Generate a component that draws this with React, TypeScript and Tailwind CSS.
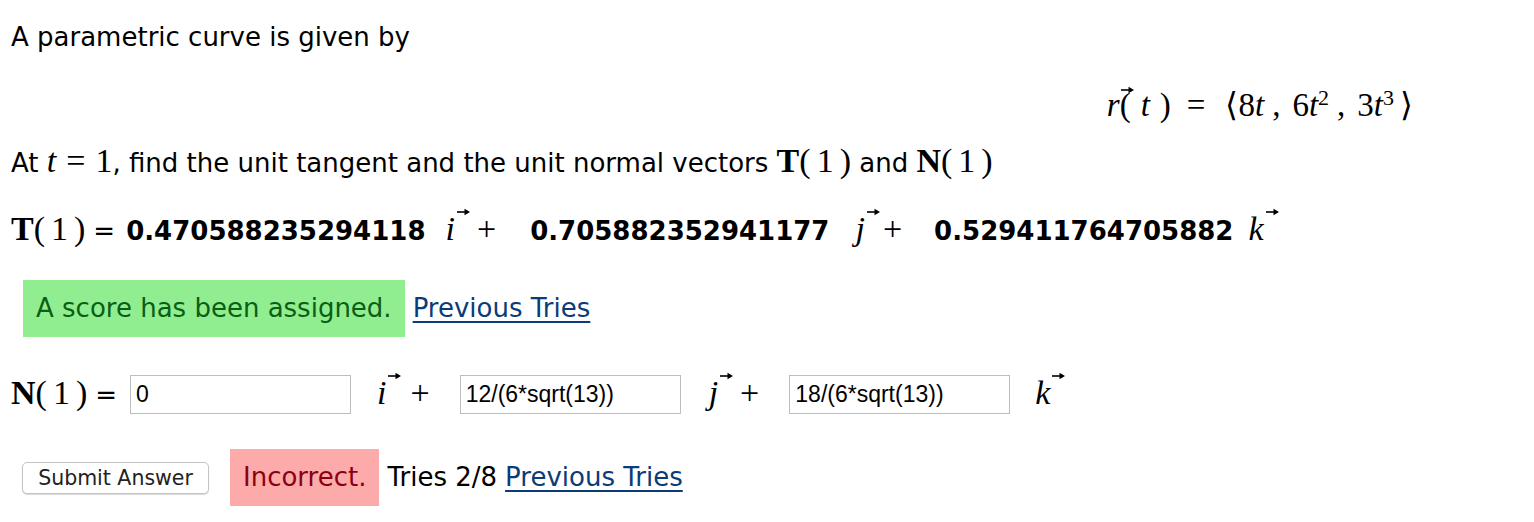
import React from 'react'

const SERIF = "font-['Liberation_Serif','Times_New_Roman',serif]"

function Arrow({ className }: { className: string }) {
  return (
    <svg className={className} width="13" height="8" viewBox="0 0 13 8">
      <path d="M0 4h9" stroke="black" strokeWidth="1.6" />
      <path d="M7.5 0.8L13 4L7.5 7.2z" fill="black" />
    </svg>
  )
}

// MathJax-style vector, arrow sits a little right of the letter
function Vec({ ch, className = '' }: { ch: string; className?: string }) {
  return (
    <span className={`relative inline-block italic ${SERIF} text-[34px] ${className}`}>
      {ch}
      <Arrow className="absolute left-[calc(100%+2px)] top-[-1px]" />
    </span>
  )
}

function Plus({ className = '' }: { className?: string }) {
  return <span className={`${SERIF} text-[34px] ${className}`}>+</span>
}

// bold letter applied to ( 1 )
function AtOne({ letter }: { letter: string }) {
  return (
    <span className={`${SERIF} text-[34px]`}>
      <b>{letter}</b>(<span className="mx-[6px]">1</span>)
    </span>
  )
}

function Answer({ value }: { value: string }) {
  return (
    <input
      readOnly
      value={value}
      className="h-[39px] w-[221px] self-center border border-[#bdbdbd] bg-white px-[5px] font-['Liberation_Sans',Arial,sans-serif] text-[23px] text-black outline-none"
    />
  )
}

export default function App() {
  return (
    <div className="min-h-[522px] bg-white pl-[11px] font-['DejaVu_Sans',Verdana,sans-serif] text-[26px] text-black">
      <div className="pt-[22px] leading-[31px]">A parametric curve is given by</div>

      <div className={`mt-[34px] flex justify-end pr-[121px] leading-[36px] ${SERIF} text-[33px]`}>
        <span className="relative italic">
          r
          <Arrow className="absolute left-[14px] top-[-1px]" />
        </span>
        <span>
          (<i className="mx-[10px]">t</i>)
        </span>
        <span className="ml-[16px]">=</span>
        <span className="ml-[20px]">
          ⟨8<i>t</i>
          <span className="ml-[8px]">,</span>
          <span className="ml-[12px]">6</span>
          <i>t</i>
          <sup className="text-[22px]">2</sup>
          <span className="ml-[8px]">,</span>
          <span className="ml-[12px]">3</span>
          <i>t</i>
          <sup className="text-[22px]">3</sup>
          <span className="ml-[6px]">⟩</span>
        </span>
      </div>

      <div className="mt-[20px] leading-[36px]">
        At{' '}
        <span className={`${SERIF} text-[34px]`}>
          <i>t</i>
          <span className="mx-[10px]">=</span>1
        </span>
        , find the unit tangent and the unit normal vectors <AtOne letter="T" /> and <AtOne letter="N" />
      </div>

      <div className="mt-[28px] flex items-baseline leading-[40px]">
        <AtOne letter="T" />
        <span className="ml-[8px]">=</span>
        <b className="ml-[11px]">0.470588235294118</b>
        <Vec ch="i" className="ml-[20px]" />
        <Plus className="ml-[22px]" />
        <b className="ml-[34px]">0.705882352941177</b>
        <Vec ch="j" className="ml-[26px]" />
        <Plus className="ml-[18px]" />
        <b className="ml-[32px]">0.529411764705882</b>
        <Vec ch="k" className="ml-[15px]" />
      </div>

      <div className="mt-[29px] flex items-center">
        <span className="ml-[12px] flex h-[57px] items-center bg-[#90ee90] px-[13px] text-[#0b5e14]">
          A score has been assigned.
        </span>
        <a href="#" className="ml-[8px] text-[#0b3b78] underline decoration-[2px] underline-offset-[4px]">
          Previous Tries
        </a>
      </div>

      <div className="mt-[36px] flex items-baseline leading-[40px]">
        <AtOne letter="N" />
        <span className="ml-[8px] mr-[13px]">=</span>
        <Answer value="0" />
        <Vec ch="i" className="ml-[26px]" />
        <Plus className="ml-[24px]" />
        <span className="w-[30px]" />
        <Answer value="12/(6*sqrt(13))" />
        <Vec ch="j" className="ml-[28px]" />
        <Plus className="ml-[22px]" />
        <span className="w-[30px]" />
        <Answer value="18/(6*sqrt(13))" />
        <Vec ch="k" className="ml-[25px]" />
      </div>

      <div className="mt-[34px] flex items-center">
        <button
          type="button"
          className="ml-[11px] h-[32px] w-[187px] rounded-[5px] border border-[#c4c4c4] bg-white text-[20.5px] text-[#222] shadow-[0_1px_1px_rgba(0,0,0,0.15)]"
        >
          Submit Answer
        </button>
        <span className="ml-[21px] flex h-[57px] items-center bg-[#fdaaaa] px-[13px] text-[#8b0010]">Incorrect.</span>
        <span className="ml-[8px]">Tries 2/8</span>
        <a href="#" className="ml-[8px] text-[#0b3b78] underline decoration-[2px] underline-offset-[4px]">
          Previous Tries
        </a>
      </div>
    </div>
  )
}
